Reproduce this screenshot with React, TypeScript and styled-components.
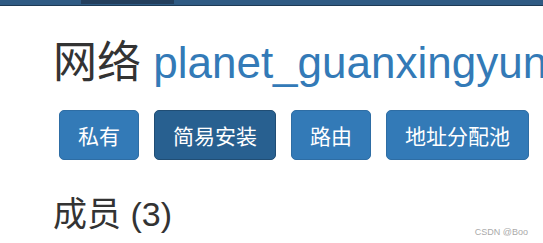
import React from "react";
import styled, { createGlobalStyle } from "styled-components";

const GlobalStyle = createGlobalStyle`
  html, body {
    margin: 0;
    padding: 0;
    background: #fff;
    overflow: hidden;
  }
  body {
    font-family: "Liberation Sans", "Noto Sans CJK SC", sans-serif;
    color: #333;
  }
`;

const Page = styled.div`
  position: relative;
  width: 543px;
  height: 243px;
  overflow: hidden;
`;

const NavBar = styled.div`
  height: 5px;
  background: #2f5b84;
  border-bottom: 1px solid #1d3a55;
  display: flex;
  padding-left: 81px;
`;

const NavTab = styled.div`
  width: 93px;
  height: 4px;
  background: #233f5d;
`;

const Content = styled.div`
  padding: 28px 0 0 53px;
`;

const Heading = styled.h1`
  margin: 0;
  height: 50px;
  font-weight: 400;
  font-size: 44px;
  line-height: 50px;
  white-space: nowrap;
`;

const Cjk = styled.span`
  font-family: "Noto Sans CJK SC", sans-serif;
`;

const NetLink = styled.a`
  color: #337ab7;
  text-decoration: none;
`;

const ButtonRow = styled.div`
  display: flex;
  gap: 15px;
  margin: 26px 0 0 6px;
`;

const Tab = styled.button<{ $active?: boolean }>`
  font-family: "Noto Sans CJK SC", sans-serif;
  font-size: 21px;
  line-height: 28px;
  padding: 10px 18px;
  color: #fff;
  border-radius: 5px;
  border: 1px solid ${(p) => (p.$active ? "#204d74" : "#2e6da4")};
  background: ${(p) => (p.$active ? "#286090" : "#337ab7")};
  cursor: pointer;
`;

const SubHeading = styled.h2`
  margin: 32px 0 0;
  height: 40px;
  font-weight: 400;
  font-size: 34px;
  line-height: 40px;
  white-space: nowrap;
`;

const Watermark = styled.div`
  position: absolute;
  right: 15px;
  bottom: 6px;
  font-family: "Liberation Sans", sans-serif;
  font-size: 9px;
  color: #aaa;
`;

const tabs = ["私有", "简易安装", "路由", "地址分配池"];

export default function App() {
  return (
    <Page>
      <GlobalStyle />
      <NavBar>
        <NavTab />
      </NavBar>
      <Content>
        <Heading>
          <Cjk>网络</Cjk> <NetLink href="#">planet_guanxingyun</NetLink>
        </Heading>
        <ButtonRow>
          {tabs.map((t, i) => (
            <Tab key={t} $active={i === 1}>
              {t}
            </Tab>
          ))}
        </ButtonRow>
        <SubHeading>
          <Cjk>成员</Cjk> (3)
        </SubHeading>
      </Content>
      <Watermark>CSDN @Boo</Watermark>
    </Page>
  );
}
